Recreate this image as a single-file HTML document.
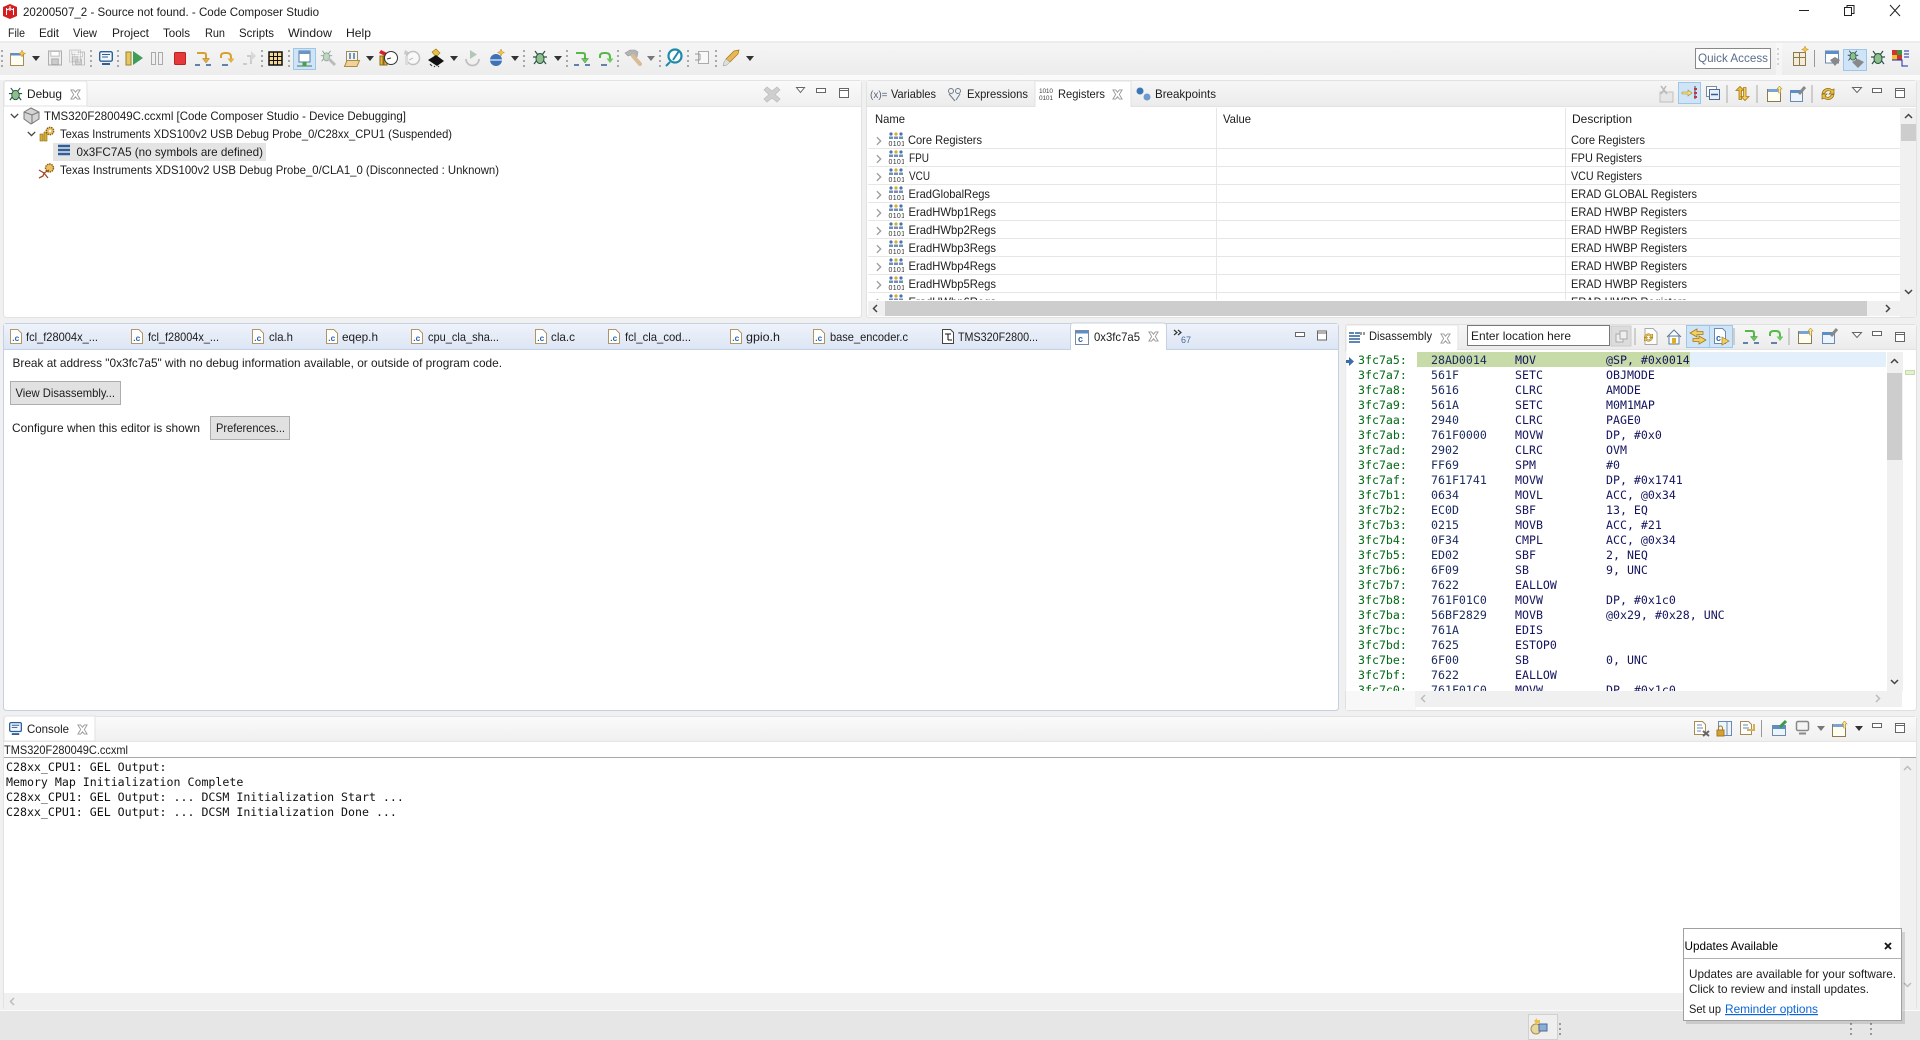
<!DOCTYPE html>
<html><head><meta charset="utf-8"><title>Code Composer Studio</title>
<style>
html,body{margin:0;padding:0;background:#f0f0f0;width:1920px;height:1040px;overflow:hidden}
svg{display:block}
text{font-family:"Liberation Sans",sans-serif;font-size:12px;fill:#1c1c1c}
.m text,text.m{font-family:"DejaVu Sans Mono","Liberation Mono",monospace;font-size:11.6px;fill:#14145e}
.a text{fill:#006a14}
.o text{fill:#1c2c60}
</style></head><body>
<svg xmlns="http://www.w3.org/2000/svg" width="1920" height="1040" viewBox="0 0 1920 1040">
<defs>
<linearGradient id="tb" x1="0" y1="0" x2="0" y2="1"><stop offset="0" stop-color="#f6f6f6"/><stop offset="1" stop-color="#ececec"/></linearGradient>
<linearGradient id="tabg" x1="0" y1="0" x2="0" y2="1"><stop offset="0" stop-color="#fafafa"/><stop offset="1" stop-color="#f0f0f0"/></linearGradient>
<linearGradient id="edg" x1="0" y1="0" x2="0" y2="1"><stop offset="0" stop-color="#eef2fa"/><stop offset="1" stop-color="#dde6f5"/></linearGradient>
<clipPath id="c1"><rect x="868" y="108" width="1032" height="192"/></clipPath>
<clipPath id="c2"><rect x="1345" y="350" width="542" height="341"/></clipPath>
<symbol id="tri" viewBox="0 0 8 5"><path d="M0 0h8L4 5z" fill="#333"/></symbol>
<symbol id="trig" viewBox="0 0 8 5"><path d="M0 0h8L4 5z" fill="#777"/></symbol>
<symbol id="x" viewBox="0 0 12 12"><path d="M1 1l3 0 2 2.500L8 1h3l-3 5 3 5H8L6 8.500 4 11H1l3-5z" fill="#fff" stroke="#9a9a9a"/></symbol>
<symbol id="min" viewBox="0 0 10 5"><rect x=".5" y=".5" width="9" height="4" fill="#fff" stroke="#666"/></symbol>
<symbol id="max" viewBox="0 0 10 10"><rect x=".5" y=".5" width="9" height="9" fill="#fff" stroke="#666"/><path d="M0 2.500h10" stroke="#666"/></symbol>
<symbol id="cfile" viewBox="0 0 13 16"><path d="M.5.5h8l4 4v11H.5z" fill="#fff" stroke="#a88c55"/><text x="2.500" y="13" style="font-size:9px;fill:#2a62a8;font-weight:bold">.c</text></symbol>
<symbol id="reg" viewBox="0 0 16 16"><circle cx="3" cy="2" r="1.600" fill="#4c74a8"/><circle cx="8" cy="2" r="1.600" fill="#d8aa38"/><circle cx="13" cy="2" r="1.600" fill="#4c74a8"/><path d="M1 7V4.500h4V7zM6 7V4.500h4V7zM11 7V4.500h4V7z" fill="#6f8fb8"/><text x=".5" y="14" style="font-size:7px;fill:#333;letter-spacing:.3px">0101</text></symbol>
<symbol id="bug" viewBox="0 0 16 16"><path d="M3 1l3 4M13 1l-3 4M1 7h4M15 7h-4M2 14l3-4M14 14l-3-4" stroke="#2b5348" stroke-width="1.200" fill="none"/><ellipse cx="8" cy="8.500" rx="4" ry="5" fill="#8cc088" stroke="#2b5348"/></symbol>
<symbol id="chev" viewBox="0 0 7 11"><path d="M1 1l4.500 4.500L1 10" fill="none" stroke="#9a9a9a" stroke-width="1.500"/></symbol>
<symbol id="down" viewBox="0 0 11 7"><path d="M1 1l4.500 4.500L10 1" fill="none" stroke="#444" stroke-width="1.600"/></symbol>
<symbol id="gear" viewBox="0 0 16 16"><rect x="1" y="8" width="3" height="7" fill="#d8b030" stroke="#8a6a10" stroke-width=".6"/><rect x="5" y="6" width="3" height="9" fill="#d8b030" stroke="#8a6a10" stroke-width=".6"/><circle cx="11" cy="5" r="3.700" fill="#e8c060" stroke="#8a5a10" stroke-width="1.400" stroke-dasharray="1.500 .8"/><circle cx="11" cy="5" r="1.200" fill="#fff"/></symbol>
<symbol id="newf" viewBox="0 0 16 16"><rect x=".5" y="3.500" width="13" height="12" fill="#fdfdf2" stroke="#a88c55"/><rect x="1" y="3" width="12" height="2.500" fill="#5c8fc8"/><path d="M12 0l1 2.500 2.500 1-2.500 1-1 2.500-1-2.500-2.500-1 2.500-1z" fill="#f5c840" stroke="#c08a20" stroke-width=".5"/></symbol>
<symbol id="save" viewBox="0 0 15 16"><path d="M.5.500h14v15H.5z" fill="#eee" stroke="#aaa"/><rect x="3" y="1" width="9" height="5" fill="#fff" stroke="#bbb"/><rect x="4" y="9" width="7" height="6" fill="#ccc" stroke="#aaa"/></symbol>
<symbol id="mon" viewBox="0 0 14 14"><rect x=".7" y=".7" width="12.600" height="9.500" rx="1.500" fill="#f2f6fb" stroke="#2f5f98" stroke-width="1.400"/><path d="M3 3.500h8M3 6h6" stroke="#2f5f98"/><path d="M3 13h8" stroke="#2f5f98" stroke-width="2"/></symbol>
<symbol id="into" viewBox="0 0 16 16"><path d="M2 3h7q2 0 2 2v5" fill="none" stroke="#d8a030" stroke-width="2"/><path d="M7.500 8.500h7L11 13z" fill="#e0b040" stroke="#a87818" stroke-width=".5"/><path d="M0 15h5M11 15h5" stroke="#345c94" stroke-width="1.500"/></symbol>
<symbol id="over" viewBox="0 0 16 16"><path d="M3 8V6q0-3 4-3h2q4 0 4 4v2" fill="none" stroke="#d8a030" stroke-width="2"/><path d="M9.500 8.500h7L13 13z" fill="#e0b040"/><path d="M4 15h6" stroke="#345c94" stroke-width="1.500"/></symbol>
<symbol id="intog" viewBox="0 0 16 16"><path d="M2 3h7q2 0 2 2v5" fill="none" stroke="#55b848" stroke-width="2"/><path d="M7.500 8.500h7L11 13z" fill="#6cc860" stroke="#3a8a30" stroke-width=".5"/><path d="M0 15h5M11 15h5" stroke="#345c94" stroke-width="1.500"/></symbol>
<symbol id="overg" viewBox="0 0 16 16"><path d="M3 8V6q0-3 4-3h2q4 0 4 4v2" fill="none" stroke="#55b848" stroke-width="2"/><path d="M9.500 8.500h7L13 13z" fill="#6cc860"/><path d="M4 15h6" stroke="#345c94" stroke-width="1.500"/></symbol>
<symbol id="wnew" viewBox="0 0 16 16"><rect x=".5" y="3.500" width="13" height="12" fill="#fffef0" stroke="#8a7a50"/><rect x="1" y="3" width="12" height="3" fill="#78a4d4"/><path d="M12.500 0l2.500 3h-1.500v4h-2V3H10z" fill="#f8e8a0" stroke="#c09a30" stroke-width=".6"/></symbol>
<symbol id="wpin" viewBox="0 0 16 16"><rect x=".5" y="4.500" width="12" height="11" fill="#eef4fb" stroke="#6a8ab0"/><rect x="1" y="4" width="11" height="3" fill="#5c8fc8"/><path d="M15 1L9 8" stroke="#888" stroke-width="3"/></symbol>
<symbol id="swap" viewBox="0 0 17 16"><path d="M4 14V5H1l4-4 4 4H6.500v9z" fill="#e8c040" stroke="#a87818" stroke-width=".8"/><path d="M11 2v9h3l-4 4-4-4h2.500V2z" fill="#f0d060" stroke="#a87818" stroke-width=".8"/></symbol>
<symbol id="sync" viewBox="0 0 16 16"><path d="M2 8a6 6 0 0 1 10-4l2-1v5h-5l2-2a3.500 3.500 0 0 0-6 1z" fill="#ecc040" stroke="#8a6a18" stroke-width=".7"/><path d="M14 8a6 6 0 0 1-10 4l-2 1V8h5l-2 2a3.500 3.500 0 0 0 6-1z" fill="#ecc040" stroke="#8a6a18" stroke-width=".7"/></symbol>
</defs>

<rect width="1920" height="1040" fill="#f0f0f0"/>
<rect width="1920" height="41" fill="#fff"/>
<rect y="41" width="1920" height="34" fill="url(#tb)"/>
<rect y="41" width="1920" height="2" fill="#ececec"/>
<rect y="75" width="1920" height="5" fill="#fafafa"/>

<!-- title -->
<path d="M3 7l7-3 7 3v9l-7 3-7-3z" fill="#d21f1f"/><path d="M6.500 8v7M10 6v5M13.500 8v7M6.500 10l3.500-1.500 3.500 1.500" stroke="#fff" stroke-width="1" fill="none"/>
<text x="23" y="16" textLength="296" lengthAdjust="spacingAndGlyphs">20200507_2 - Source not found. - Code Composer Studio</text>
<path d="M1799 10.500h10" stroke="#222"/><path d="M1844.500 7.500h7v8h-7zM1847 7.500v-2h7v8h-2" fill="none" stroke="#222"/><path d="M1890 5l10 11M1900 5l-10 11" stroke="#222"/>

<!-- menu -->
<g>
<text x="8" y="37" textLength="17" lengthAdjust="spacingAndGlyphs">File</text>
<text x="39" y="37" textLength="20" lengthAdjust="spacingAndGlyphs">Edit</text>
<text x="73" y="37" textLength="24" lengthAdjust="spacingAndGlyphs">View</text>
<text x="112" y="37" textLength="37" lengthAdjust="spacingAndGlyphs">Project</text>
<text x="163" y="37" textLength="27" lengthAdjust="spacingAndGlyphs">Tools</text>
<text x="205" y="37" textLength="20" lengthAdjust="spacingAndGlyphs">Run</text>
<text x="239" y="37" textLength="35" lengthAdjust="spacingAndGlyphs">Scripts</text>
<text x="288" y="37" textLength="44" lengthAdjust="spacingAndGlyphs">Window</text>
<text x="346" y="37" textLength="25" lengthAdjust="spacingAndGlyphs">Help</text>
</g>

<!-- toolbar grips -->
<g stroke="#a8a8a8" stroke-width="2" stroke-dasharray="2 3">
<path d="M2 50v17M91 50v17M118 50v17M262 50v17M289 50v17M524 50v17M567 50v17M618 50v17M660 50v17M688 50v17M716 50v17M1778 48v20"/>
</g>
<rect x="1776" y="43" width="6" height="32" fill="#fbfbfb" opacity=".5"/>
<!-- toolbar icons -->
<use href="#newf" x="10" y="50" width="16" height="16"/><use href="#tri" x="32" y="56" width="8" height="5"/>
<use href="#save" x="48" y="50" width="14" height="16"/>
<use href="#save" x="72" y="51" width="13" height="15" opacity=".8"/><use href="#save" x="69" y="49" width="12" height="14" opacity=".6"/>
<use href="#mon" x="99" y="51" width="14" height="14"/>
<rect x="126" y="52" width="5" height="13" fill="#e6c860" stroke="#9a8030"/><path d="M133 51l10 7-10 7z" fill="#3f9d58"/>
<path d="M151.500 52.500h4v12h-4zM158.500 52.500h4v12h-4z" fill="#f0f0f0" stroke="#aaa"/>
<rect x="174.500" y="52.500" width="11" height="12" rx="1" fill="#e5383a" stroke="#b22"/>
<use href="#into" x="195" y="50" width="16" height="16"/>
<use href="#over" x="218" y="50" width="16" height="16"/>
<g opacity=".45"><path d="M243 64h4M251 64v-8h-4" fill="none" stroke="#888" stroke-width="1.500"/><path d="M251 51l5 5-5 5z" fill="#bbb"/></g>
<rect x="269" y="52" width="13" height="13" fill="#f8d890" stroke="#111" stroke-width="1.500"/><path d="M273.500 52v13M277.500 52v13M269 56.500h13M269 60.500h13" stroke="#111"/>
<rect x="293.500" y="48.500" width="22" height="21" fill="#cfe4f7" stroke="#9cc6ea"/>
<rect x="299" y="51" width="11" height="11" fill="#fff" stroke="#5a7ba0"/><rect x="299" y="51" width="11" height="3" fill="#6a94c4"/><path d="M297 66h15M304.500 62v4" stroke="#4a7a50"/><rect x="302.500" y="62" width="4" height="4" fill="#4aa04a"/>
<g opacity=".5"><use href="#bug" x="320" y="50" width="13" height="13"/><path d="M328 58l7 7" stroke="#888" stroke-width="3"/></g>
<path d="M346.500 51.500h11v11h-11z" fill="#f8f6ec" stroke="#9a8a60"/><path d="M344.500 66.500l2.500-6h12.500l-2.500 6z" fill="#eed49c" stroke="#b08a40"/><path d="M350 53v6M354 53v6" stroke="#2a62a8" stroke-width="1.300"/>
<use href="#tri" x="366" y="56" width="8" height="5"/>
<path d="M381 50l6 3-2 3-6-3z" fill="#d91f2a"/><rect x="380" y="56" width="3" height="9" fill="#e0b840" stroke="#8a6a10"/><rect x="384" y="56" width="3" height="9" fill="#e0b840" stroke="#8a6a10"/><circle cx="391" cy="58" r="6.500" fill="#fff" stroke="#333"/><path d="M391 58l-4 1" stroke="#333"/>
<g opacity=".55"><path d="M405 50l5 3-2 3-4-2z" fill="#aaa"/><circle cx="413" cy="58" r="6.500" fill="#fff" stroke="#999" stroke-width="1.500"/><path d="M413 58l-4 2" stroke="#999"/><path d="M405 56h3v9h-3z" fill="#ccc"/></g>
<path d="M432 52l4-3 4 4-4 4z" fill="#e8c040" stroke="#a87818" stroke-width=".7"/><path d="M428 60l8-5 8 6-7 5z" fill="#111"/><path d="M430 64l2 2M434 66l1 1M438 66l1 1" stroke="#333"/>
<use href="#tri" x="450" y="56" width="8" height="5"/>
<g opacity=".55"><path d="M466 59a6.500 6.500 0 0 0 13 0" fill="none" stroke="#999" stroke-width="1.800"/><path d="M470 50l7 4.500-7 4.500z" fill="#7fa58a"/></g>
<circle cx="496" cy="60" r="6" fill="#3f72b4"/><path d="M490 60h12" stroke="#9fc0e6" stroke-width="2"/><path d="M501 49l1 2.500 2.500 1-2.500 1-1 2.500-1-2.500-2.500-1 2.500-1z" fill="#f5c840" stroke="#c08a20" stroke-width=".5"/>
<use href="#tri" x="511" y="56" width="8" height="5"/>
<use href="#bug" x="532" y="50" width="16" height="16"/><use href="#tri" x="554" y="56" width="8" height="5"/>
<use href="#intog" x="574" y="50" width="16" height="16"/>
<use href="#overg" x="597" y="50" width="16" height="16"/>
<path d="M625 53l5-3h5l3 2-1 5-3 1-3-3-3 1z" fill="#b4b4b4" stroke="#999" stroke-width=".6"/><path d="M633 56l7 8" stroke="#d8bc98" stroke-width="4" stroke-linecap="round"/>
<use href="#trig" x="647" y="56" width="8" height="5"/>
<circle cx="675" cy="56" r="6.500" fill="#fff" stroke="#1d8aa8" stroke-width="2.200"/><path d="M679 51l-6 9M670 62l-4 4" stroke="#1d8aa8" stroke-width="2"/>
<rect x="698.500" y="51.500" width="10" height="12" fill="#f8f8f8" stroke="#aaa"/><path d="M695 54h5M695 60h5M700 54v6" stroke="#999" fill="none"/>
<path d="M739 50l-1 4-8 8-4-3 8-8z" fill="#e8b858" stroke="#a87818" stroke-width=".7"/><path d="M730 62l-3 3-4 1 1-4 2-3z" fill="#ddd" stroke="#998" stroke-width=".5"/>
<use href="#tri" x="746" y="56" width="8" height="5"/>

<!-- quick access -->
<rect x="1695.500" y="48.500" width="75" height="20" fill="#fff" stroke="#888"/>
<text x="1698" y="62" textLength="70" lengthAdjust="spacingAndGlyphs" style="fill:#5a6d8c">Quick Access</text>
<rect x="1793.500" y="52.500" width="12" height="13" fill="#f4ecd8" stroke="#8a7a50"/><path d="M1793 57.500h13M1799.500 52v14" stroke="#8a7a50"/><path d="M1805 46l1 2.500 2.500 1-2.500 1-1 2.500-1-2.500-2.500-1 2.500-1z" fill="#f5c840" stroke="#c08a20" stroke-width=".5"/>
<path d="M1814.500 50v17" stroke="#999"/>
<rect x="1825.500" y="51" width="13" height="12" fill="#fff" stroke="#6a8ab0"/><rect x="1826" y="51" width="12" height="3" fill="#5c8fc8"/><path d="M1830 60l5-3 5 3-5 6z" fill="#888"/>
<rect x="1843.500" y="49.500" width="23" height="21" fill="#cfe4f7" stroke="#9cc6ea"/>
<use href="#bug" x="1847" y="50" width="12" height="12"/><path d="M1852 62l6-3 6 3-6 6z" fill="#888"/>
<use href="#bug" x="1870" y="50" width="16" height="16"/>
<rect x="1892" y="50" width="5" height="5" fill="#d63030"/><rect x="1897" y="50" width="5" height="5" fill="#3a9a3a"/><rect x="1892" y="55" width="5" height="5" fill="#f0c030"/><rect x="1897" y="55" width="5" height="5" fill="#d63030"/><path d="M1892 60h10v6h6M1904 51h5M1904 54h5M1904 57h5" stroke="#1a2aa8" fill="none"/>

<!-- DEBUG PANEL -->
<rect x="3.500" y="80.500" width="858" height="237" rx="3" fill="#fff" stroke="#e2e2e2"/>
<rect x="4" y="81" width="857" height="25" fill="url(#tabg)"/>
<path d="M4 106V84q0-3 3-3h77q3 0 3 3v22z" fill="#fff" stroke="#e2e2e2"/>
<path d="M87 106.500h774" stroke="#e4e4e4"/>
<use href="#bug" x="8" y="87" width="15" height="15"/>
<text x="27" y="98" textLength="35" lengthAdjust="spacingAndGlyphs">Debug</text>
<use href="#x" x="70" y="89" width="11" height="11"/>
<path d="M767 87l5 4 5-4 3 3-5 4.500 5 4.500-3 3-5-4-5 4-3-3 5-4.500-5-4.500z" fill="#cfcfcf" stroke="#bbb" stroke-width=".7"/>
<path d="M796.500 87.500h8l-4 5z" fill="#fff" stroke="#666"/>
<use href="#min" x="816" y="88" width="10" height="5"/><use href="#max" x="839" y="88" width="10" height="10"/>

<use href="#down" x="10" y="113" width="9" height="6"/>
<path d="M24 112l7-4 8 4v7l-8 5-7-5z" fill="#d4d4d4" stroke="#777"/><path d="M24 112l8 3 7-3M32 115v9" stroke="#777" fill="none"/>
<text x="44" y="120" textLength="362" lengthAdjust="spacingAndGlyphs">TMS320F280049C.ccxml [Code Composer Studio - Device Debugging]</text>
<use href="#down" x="27" y="131" width="9" height="6"/>
<use href="#gear" x="39" y="126" width="16" height="16"/>
<text x="60" y="138" textLength="392" lengthAdjust="spacingAndGlyphs">Texas Instruments XDS100v2 USB Debug Probe_0/C28xx_CPU1 (Suspended)</text>
<rect x="53" y="143" width="213" height="18" fill="#e4e4e4"/>
<path d="M58 146h12M58 150h12M58 154h12" stroke="#2f5f98" stroke-width="2.500"/>
<text x="76.500" y="156" textLength="186.500" lengthAdjust="spacingAndGlyphs">0x3FC7A5  (no symbols are defined)</text>
<circle cx="49.500" cy="168" r="4" fill="#e8c060" stroke="#8a5a10" stroke-width="1.400" stroke-dasharray="1.500 .8"/>
<path d="M39 170l5 3 5-3M44 173l-1 3-4 2M44 173l4 5" stroke="#a04a2a" fill="none" stroke-width="1.300"/>
<text x="60" y="174" textLength="439" lengthAdjust="spacingAndGlyphs">Texas Instruments XDS100v2 USB Debug Probe_0/CLA1_0 (Disconnected : Unknown)</text>

<!-- REGISTERS PANEL -->
<rect x="866.500" y="80.500" width="1050" height="237" rx="3" fill="#fff" stroke="#e2e2e2"/>
<rect x="867" y="81" width="1049" height="25" fill="url(#tb)"/>
<path d="M867 106.500h1049" stroke="#e2e2e2"/>
<path d="M1035 106V81h96v25" fill="#fff" stroke="#e2e2e2"/>
<rect x="1035.500" y="104" width="95" height="4" fill="#fff"/>
<text x="870" y="98" style="font-size:10px;fill:#5a6478">(x)=</text>
<text x="891" y="98" textLength="45" lengthAdjust="spacingAndGlyphs">Variables</text>
<circle cx="951" cy="91" r="2.500" fill="none" stroke="#6a7a8a"/><circle cx="958" cy="91" r="2.500" fill="none" stroke="#6a7a8a"/><path d="M949 94l6 7M960 94l-4 6" stroke="#6a7a8a"/>
<text x="967" y="98" textLength="61" lengthAdjust="spacingAndGlyphs">Expressions</text>
<text x="1039" y="93" textLength="14" style="font-size:6.500px;fill:#444">1010</text><text x="1039" y="100" textLength="14" style="font-size:6.500px;fill:#444">0101</text>
<text x="1058" y="98" textLength="47" lengthAdjust="spacingAndGlyphs">Registers</text>
<use href="#x" x="1112" y="89" width="11" height="11"/>
<circle cx="1140" cy="91" r="3.500" fill="#3a78b8"/><circle cx="1147" cy="97" r="3.500" fill="#6d9bcc"/>
<text x="1155" y="98" textLength="61" lengthAdjust="spacingAndGlyphs">Breakpoints</text>

<g opacity=".45"><rect x="1660" y="92" width="13" height="10" fill="#ddd" stroke="#888"/><path d="M1661 86l6 8M1666 86l-5 8" stroke="#777" stroke-width="1.500"/></g>
<rect x="1678.500" y="82.500" width="22" height="21" fill="#cfe4f7" stroke="#9cc6ea"/>
<path d="M1682 92h6v-2l4 3-4 3v-2h-6z" fill="#f0e080" stroke="#a89030" stroke-width=".6"/><path d="M1695 86v13" stroke="#6a7a90" stroke-width="1.500"/><rect x="1694" y="88" width="3" height="2" fill="#c33"/><rect x="1694" y="92" width="3" height="2" fill="#c33"/><rect x="1694" y="96" width="3" height="2" fill="#c33"/>
<rect x="1706.500" y="86.500" width="10" height="10" fill="#fff" stroke="#7a8aa0"/><rect x="1709.500" y="89.500" width="10" height="10" fill="#e8eff8" stroke="#4a6a98"/><path d="M1711 94.500h7" stroke="#345c94" stroke-width="1.500"/>
<path d="M1727 85v18M1757 85v18M1812 85v18" stroke="#aaa"/>
<use href="#swap" x="1735" y="85" width="17" height="17"/>
<use href="#wnew" x="1767" y="86" width="16" height="16"/>
<use href="#wpin" x="1790" y="86" width="16" height="16"/>
<use href="#sync" x="1820" y="86" width="16" height="16"/>
<path d="M1852.500 87.500h9l-4.500 5z" fill="#fff" stroke="#666"/>
<use href="#min" x="1872" y="88" width="10" height="5"/><use href="#max" x="1895" y="88" width="10" height="10"/>

<!-- registers table -->
<text x="875" y="123" textLength="30" lengthAdjust="spacingAndGlyphs">Name</text>
<text x="1223" y="123" textLength="28" lengthAdjust="spacingAndGlyphs">Value</text>
<text x="1572" y="123" textLength="60" lengthAdjust="spacingAndGlyphs">Description</text>
<g stroke="#e6e6e6">
<path d="M1216.500 108v192M1565.500 108v192"/>
<path d="M868 148.500h1032M868 166.500h1032M868 184.500h1032M868 202.500h1032M868 220.500h1032M868 238.500h1032M868 256.500h1032M868 274.500h1032M868 292.500h1032"/>
</g>
<g clip-path="url(#c1)">
<use href="#chev" x="876" y="136" width="6" height="10"/><use href="#reg" x="888" y="132" width="16" height="16"/><text x="908" y="144" textLength="74" lengthAdjust="spacingAndGlyphs">Core Registers</text><text x="1571" y="144" textLength="74" lengthAdjust="spacingAndGlyphs">Core Registers</text>
<use href="#chev" x="876" y="154" width="6" height="10"/><use href="#reg" x="888" y="150" width="16" height="16"/><text x="909" y="162" textLength="20" lengthAdjust="spacingAndGlyphs">FPU</text><text x="1571" y="162" textLength="71" lengthAdjust="spacingAndGlyphs">FPU Registers</text>
<use href="#chev" x="876" y="172" width="6" height="10"/><use href="#reg" x="888" y="168" width="16" height="16"/><text x="909" y="180" textLength="21" lengthAdjust="spacingAndGlyphs">VCU</text><text x="1571" y="180" textLength="71" lengthAdjust="spacingAndGlyphs">VCU Registers</text>
<use href="#chev" x="876" y="190" width="6" height="10"/><use href="#reg" x="888" y="186" width="16" height="16"/><text x="908.500" y="198" textLength="81.500" lengthAdjust="spacingAndGlyphs">EradGlobalRegs</text><text x="1571" y="198" textLength="126" lengthAdjust="spacingAndGlyphs">ERAD GLOBAL Registers</text>
<use href="#chev" x="876" y="208" width="6" height="10"/><use href="#reg" x="888" y="204" width="16" height="16"/><text x="908.500" y="216" textLength="87.500" lengthAdjust="spacingAndGlyphs">EradHWbp1Regs</text><text x="1571" y="216" textLength="116" lengthAdjust="spacingAndGlyphs">ERAD HWBP Registers</text>
<use href="#chev" x="876" y="226" width="6" height="10"/><use href="#reg" x="888" y="222" width="16" height="16"/><text x="908.500" y="234" textLength="87.500" lengthAdjust="spacingAndGlyphs">EradHWbp2Regs</text><text x="1571" y="234" textLength="116" lengthAdjust="spacingAndGlyphs">ERAD HWBP Registers</text>
<use href="#chev" x="876" y="244" width="6" height="10"/><use href="#reg" x="888" y="240" width="16" height="16"/><text x="908.500" y="252" textLength="87.500" lengthAdjust="spacingAndGlyphs">EradHWbp3Regs</text><text x="1571" y="252" textLength="116" lengthAdjust="spacingAndGlyphs">ERAD HWBP Registers</text>
<use href="#chev" x="876" y="262" width="6" height="10"/><use href="#reg" x="888" y="258" width="16" height="16"/><text x="908.500" y="270" textLength="87.500" lengthAdjust="spacingAndGlyphs">EradHWbp4Regs</text><text x="1571" y="270" textLength="116" lengthAdjust="spacingAndGlyphs">ERAD HWBP Registers</text>
<use href="#chev" x="876" y="280" width="6" height="10"/><use href="#reg" x="888" y="276" width="16" height="16"/><text x="908.500" y="288" textLength="87.500" lengthAdjust="spacingAndGlyphs">EradHWbp5Regs</text><text x="1571" y="288" textLength="116" lengthAdjust="spacingAndGlyphs">ERAD HWBP Registers</text>
<use href="#chev" x="876" y="298" width="6" height="10"/><use href="#reg" x="888" y="294" width="16" height="16"/><text x="908.500" y="306" textLength="87.500" lengthAdjust="spacingAndGlyphs">EradHWbp6Regs</text><text x="1571" y="306" textLength="116" lengthAdjust="spacingAndGlyphs">ERAD HWBP Registers</text>
</g>
<rect x="1900" y="108" width="16" height="209" fill="#f0f0f0"/>
<rect x="1901" y="124" width="15" height="17" fill="#cdcdcd"/>
<path d="M1905 118l3.500-3.500 3.500 3.500" fill="none" stroke="#444" stroke-width="1.500"/>
<path d="M1905 290l3.500 3.500 3.500-3.500" fill="none" stroke="#444" stroke-width="1.500"/>
<rect x="868" y="301" width="1032" height="15" fill="#f0f0f0"/>
<rect x="885" y="301" width="982" height="15" fill="#cdcdcd"/>
<path d="M877 305l-3.500 3.500 3.500 3.500M1886 305l3.500 3.500-3.500 3.500" fill="none" stroke="#444" stroke-width="1.500"/>

<!-- EDITOR PANEL -->
<rect x="3.500" y="323.500" width="1335" height="387" rx="3" fill="#fff" stroke="#c4d0e4"/>
<rect x="4" y="324" width="1334" height="25" fill="url(#edg)"/>
<path d="M4 349.500h1334" stroke="#c4d0e4"/>
<path d="M1070.500 349V326q0-3 3-3h90q3 0 3 3v23" fill="#fff" stroke="#c4d0e4"/>
<rect x="1071" y="348" width="95" height="3" fill="#fff"/>
<use href="#cfile" x="10" y="329" width="12" height="15"/><text x="26" y="341" textLength="72" lengthAdjust="spacingAndGlyphs">fcl_f28004x_...</text>
<use href="#cfile" x="131" y="329" width="12" height="15"/><text x="148" y="341" textLength="71" lengthAdjust="spacingAndGlyphs">fcl_f28004x_...</text>
<use href="#cfile" x="252" y="329" width="12" height="15"/><text x="269" y="341" textLength="24" lengthAdjust="spacingAndGlyphs">cla.h</text>
<use href="#cfile" x="326" y="329" width="12" height="15"/><text x="342" y="341" textLength="36" lengthAdjust="spacingAndGlyphs">eqep.h</text>
<use href="#cfile" x="411" y="329" width="12" height="15"/><text x="428" y="341" textLength="71" lengthAdjust="spacingAndGlyphs">cpu_cla_sha...</text>
<use href="#cfile" x="535" y="329" width="12" height="15"/><text x="551" y="341" textLength="24" lengthAdjust="spacingAndGlyphs">cla.c</text>
<use href="#cfile" x="608" y="329" width="12" height="15"/><text x="625" y="341" textLength="66" lengthAdjust="spacingAndGlyphs">fcl_cla_cod...</text>
<use href="#cfile" x="730" y="329" width="12" height="15"/><text x="746" y="341" textLength="34" lengthAdjust="spacingAndGlyphs">gpio.h</text>
<use href="#cfile" x="813" y="329" width="12" height="15"/><text x="830" y="341" textLength="78" lengthAdjust="spacingAndGlyphs">base_encoder.c</text>
<path d="M942.500 329.500h8l3 3v11h-11z" fill="#fff" stroke="#444"/><path d="M945 334h6M948 334v6M948 340h4" stroke="#111" fill="none"/>
<text x="958" y="341" textLength="80" lengthAdjust="spacingAndGlyphs">TMS320F2800...</text>
<rect x="1075.500" y="330.500" width="13" height="14" fill="#fff" stroke="#7a8aa0"/><rect x="1076" y="331" width="12" height="2.500" fill="#5c8fc8"/><text x="1078" y="342" style="font-size:9px;fill:#2a62a8;font-weight:bold">c</text>
<text x="1094" y="341" textLength="46" lengthAdjust="spacingAndGlyphs">0x3fc7a5</text>
<use href="#x" x="1148" y="331" width="11" height="11"/>
<path d="M1174 330l3 2.500-3 2.500M1178 330l3 2.500-3 2.500" fill="none" stroke="#333" stroke-width="1.200"/>
<text x="1181" y="343" textLength="10" style="font-size:9px;fill:#4a6a98">67</text>
<use href="#min" x="1295" y="332" width="10" height="5"/><use href="#max" x="1317" y="330" width="10" height="11"/>

<text x="12.500" y="367" textLength="489.500" lengthAdjust="spacingAndGlyphs">Break at address "0x3fc7a5" with no debug information available, or outside of program code.</text>
<rect x="10.500" y="381.500" width="110" height="23" fill="#e1e1e1" stroke="#adadad"/>
<text x="15.500" y="397" textLength="99.500" lengthAdjust="spacingAndGlyphs">View Disassembly...</text>
<text x="12" y="432" textLength="188" lengthAdjust="spacingAndGlyphs">Configure when this editor is shown</text>
<rect x="210.500" y="416.500" width="79" height="23" fill="#e1e1e1" stroke="#adadad"/>
<text x="216" y="432" textLength="69" lengthAdjust="spacingAndGlyphs">Preferences...</text>

<!-- DISASSEMBLY PANEL -->
<rect x="1345.500" y="324.500" width="571" height="386" rx="3" fill="#fff" stroke="#e0e0e0"/>
<rect x="1346" y="325" width="570" height="24" fill="url(#tb)"/>
<path d="M1346 349.500h570" stroke="#e2e2e2"/>
<path d="M1346 349V325h112v24" fill="#fff" stroke="#e2e2e2"/>
<rect x="1347" y="347" width="110" height="4" fill="#fff"/>
<path d="M1349 333h5M1355 333h5M1349 336h11M1349 339h11M1349 342h11" stroke="#2f5f98" stroke-width="1.500"/><path d="M1361 332v3M1364 332v3" stroke="#333"/>
<text x="1369" y="340" textLength="63" lengthAdjust="spacingAndGlyphs">Disassembly</text>
<use href="#x" x="1440" y="333" width="11" height="11"/>
<rect x="1467.500" y="325.500" width="142" height="20" fill="#fff" stroke="#777"/>
<text x="1471" y="340" textLength="100" lengthAdjust="spacingAndGlyphs">Enter location here</text>
<rect x="1611" y="326" width="20" height="20" fill="#dcdcdc" stroke="#ccc"/><rect x="1616" y="334" width="7" height="8" fill="#eee" stroke="#aaa"/><rect x="1620" y="331" width="7" height="8" fill="#eee" stroke="#aaa"/>
<path d="M1635 328v17M1734 328v17M1789 328v17" stroke="#aaa"/>
<path d="M1645 328.500h8l4 4v12h-12z" fill="#fff" stroke="#aaa"/><use href="#sync" x="1643" y="332" width="11" height="11"/>
<path d="M1667 337l7-7 7 7M1669 336v8h10v-8z" fill="#fff" stroke="#5a7ba0"/><rect x="1672" y="338" width="4" height="6" fill="#d8b030"/>
<rect x="1686.500" y="325.500" width="23" height="22" fill="#cfe4f7" stroke="#9cc6ea"/>
<rect x="1709.500" y="325.500" width="23" height="22" fill="#cfe4f7" stroke="#9cc6ea"/>
<path d="M1697 329l-7 4 7 4v-2.500h6V331.500h-6zM1699 336l7 4-7 4v-2.500h-6v-3h6z" fill="#f0d060" stroke="#a87818" stroke-width=".8"/>
<path d="M1714.500 328.500h8l3 3v12h-11z" fill="#fff" stroke="#6a8ab0"/><text x="1716" y="341" style="font-size:9px;fill:#2a62a8;font-weight:bold">c</text><path d="M1722 337l7 4-7 4z" fill="#f0d060" stroke="#a87818" stroke-width=".7"/>
<use href="#intog" x="1743" y="328" width="16" height="16"/>
<use href="#overg" x="1767" y="328" width="16" height="16"/>
<use href="#wnew" x="1798" y="328" width="16" height="16"/>
<use href="#wpin" x="1822" y="328" width="16" height="16"/>
<path d="M1852.500 332.500h9l-4.500 5z" fill="#fff" stroke="#666"/>
<use href="#min" x="1872" y="331" width="10" height="5"/><use href="#max" x="1895" y="332" width="10" height="10"/>

<rect x="1417" y="352" width="469" height="15" fill="#e4effc"/>
<rect x="1417" y="352" width="273" height="15" fill="#c6dba8"/>
<path d="M1346 352v339" stroke="#f6f6f6"/>
<path d="M1346 360h3v-3l5 4.500-5 4.500v-3h-3z" fill="#3b6ea8"/>
<g clip-path="url(#c2)">
<g class="m a">
<text x="1358" y="364">3fc7a5:</text><text x="1358" y="379">3fc7a7:</text><text x="1358" y="394">3fc7a8:</text><text x="1358" y="409">3fc7a9:</text><text x="1358" y="424">3fc7aa:</text><text x="1358" y="439">3fc7ab:</text><text x="1358" y="454">3fc7ad:</text><text x="1358" y="469">3fc7ae:</text><text x="1358" y="484">3fc7af:</text><text x="1358" y="499">3fc7b1:</text><text x="1358" y="514">3fc7b2:</text><text x="1358" y="529">3fc7b3:</text><text x="1358" y="544">3fc7b4:</text><text x="1358" y="559">3fc7b5:</text><text x="1358" y="574">3fc7b6:</text><text x="1358" y="589">3fc7b7:</text><text x="1358" y="604">3fc7b8:</text><text x="1358" y="619">3fc7ba:</text><text x="1358" y="634">3fc7bc:</text><text x="1358" y="649">3fc7bd:</text><text x="1358" y="664">3fc7be:</text><text x="1358" y="679">3fc7bf:</text><text x="1358" y="694">3fc7c0:</text>
</g>
<g class="m o">
<text x="1431" y="364">28AD0014</text><text x="1431" y="379">561F</text><text x="1431" y="394">5616</text><text x="1431" y="409">561A</text><text x="1431" y="424">2940</text><text x="1431" y="439">761F0000</text><text x="1431" y="454">2902</text><text x="1431" y="469">FF69</text><text x="1431" y="484">761F1741</text><text x="1431" y="499">0634</text><text x="1431" y="514">EC0D</text><text x="1431" y="529">0215</text><text x="1431" y="544">0F34</text><text x="1431" y="559">ED02</text><text x="1431" y="574">6F09</text><text x="1431" y="589">7622</text><text x="1431" y="604">761F01C0</text><text x="1431" y="619">56BF2829</text><text x="1431" y="634">761A</text><text x="1431" y="649">7625</text><text x="1431" y="664">6F00</text><text x="1431" y="679">7622</text><text x="1431" y="694">761F01C0</text>
</g>
<g class="m">
<text x="1515" y="364">MOV</text><text x="1515" y="379">SETC</text><text x="1515" y="394">CLRC</text><text x="1515" y="409">SETC</text><text x="1515" y="424">CLRC</text><text x="1515" y="439">MOVW</text><text x="1515" y="454">CLRC</text><text x="1515" y="469">SPM</text><text x="1515" y="484">MOVW</text><text x="1515" y="499">MOVL</text><text x="1515" y="514">SBF</text><text x="1515" y="529">MOVB</text><text x="1515" y="544">CMPL</text><text x="1515" y="559">SBF</text><text x="1515" y="574">SB</text><text x="1515" y="589">EALLOW</text><text x="1515" y="604">MOVW</text><text x="1515" y="619">MOVB</text><text x="1515" y="634">EDIS</text><text x="1515" y="649">ESTOP0</text><text x="1515" y="664">SB</text><text x="1515" y="679">EALLOW</text><text x="1515" y="694">MOVW</text>
<text x="1606" y="364">@SP, #0x0014</text><text x="1606" y="379">OBJMODE</text><text x="1606" y="394">AMODE</text><text x="1606" y="409">M0M1MAP</text><text x="1606" y="424">PAGE0</text><text x="1606" y="439">DP, #0x0</text><text x="1606" y="454">OVM</text><text x="1606" y="469">#0</text><text x="1606" y="484">DP, #0x1741</text><text x="1606" y="499">ACC, @0x34</text><text x="1606" y="514">13, EQ</text><text x="1606" y="529">ACC, #21</text><text x="1606" y="544">ACC, @0x34</text><text x="1606" y="559">2, NEQ</text><text x="1606" y="574">9, UNC</text><text x="1606" y="604">DP, #0x1c0</text><text x="1606" y="619">@0x29, #0x28, UNC</text><text x="1606" y="664">0, UNC</text><text x="1606" y="694">DP, #0x1c0</text>
</g>
</g>
<rect x="1887" y="352" width="16" height="339" fill="#f0f0f0"/>
<rect x="1887" y="373" width="15" height="87" fill="#cdcdcd"/>
<path d="M1891 363l3.500-3.500 3.500 3.500" fill="none" stroke="#444" stroke-width="1.500"/>
<path d="M1891 680l3.500 3.500 3.500-3.500" fill="none" stroke="#444" stroke-width="1.500"/>
<rect x="1346" y="691" width="70" height="19" fill="#f8f8f8"/>
<rect x="1415" y="691" width="487" height="16" fill="#f0f0f0"/>
<path d="M1425 695l-3.500 3.500 3.500 3.500M1876 695l3.500 3.500-3.500 3.500" fill="none" stroke="#bbb" stroke-width="1.500"/>
<rect x="1905.500" y="370.500" width="9" height="4" fill="#e4f0d4" stroke="#c6dba8"/>

<!-- CONSOLE PANEL -->
<rect x="3.500" y="716.500" width="1913" height="294" rx="3" fill="#fff" stroke="#e2e2e2"/>
<rect x="4" y="717" width="1912" height="24" fill="url(#tabg)"/>
<path d="M4 741.500h1912" stroke="#e6e6e6"/>
<path d="M4 741V719q0-3 3-3h88q0 0 0 3v22z" fill="#fff" stroke="#e2e2e2"/>
<use href="#mon" x="9" y="722" width="13" height="13"/>
<text x="27" y="733" textLength="42" lengthAdjust="spacingAndGlyphs">Console</text>
<use href="#x" x="77" y="724" width="11" height="11"/>
<path d="M1694.500 721.500h8l3 3v10h-11z" fill="#fff" stroke="#a88c55"/><path d="M1697 725h5M1697 728h6M1697 731h4" stroke="#6a8ab0"/><path d="M1703 731l6 5M1709 731l-6 5" stroke="#666" stroke-width="2"/>
<rect x="1718.500" y="721.500" width="13" height="14" fill="#eef4fb" stroke="#6a8ab0"/><path d="M1727 722v13" stroke="#6a8ab0"/><rect x="1717" y="730" width="7" height="6" fill="#d8a030" stroke="#a07a20"/><path d="M1718.500 730v-2a2 2 0 0 1 4 0v2" fill="none" stroke="#a07a20"/>
<path d="M1740.500 721.500h8l3 3v10h-11z" fill="#fff" stroke="#a88c55"/><path d="M1743 725h5M1743 728h6" stroke="#6a8ab0"/><path d="M1754 724v6h-7" fill="none" stroke="#d8b050" stroke-width="2"/>
<path d="M1761.500 720v17" stroke="#999"/>
<rect x="1772.500" y="725.500" width="13" height="10" fill="#eef4fb" stroke="#6a8ab0"/><rect x="1773" y="726" width="12" height="3" fill="#5c8fc8"/><path d="M1786 721l-6 6" stroke="#3a9a4a" stroke-width="3"/>
<rect x="1796.500" y="721.500" width="12" height="9" rx="1.500" fill="#f4f4f4" stroke="#888" stroke-width="1.500"/><path d="M1799 733.500h7" stroke="#888" stroke-width="2"/>
<use href="#trig" x="1817" y="726" width="8" height="5"/>
<use href="#wnew" x="1832" y="721" width="16" height="16"/>
<use href="#tri" x="1855" y="726" width="8" height="5"/>
<use href="#min" x="1872" y="723" width="10" height="5"/><use href="#max" x="1895" y="723" width="10" height="10"/>
<text x="4" y="754" textLength="124" lengthAdjust="spacingAndGlyphs">TMS320F280049C.ccxml</text>
<path d="M4 757.500h1912" stroke="#a8a8a8"/>
<g class="m">
<text x="6" y="771" style="fill:#111">C28xx_CPU1: GEL Output:</text>
<text x="6" y="786" style="fill:#111">Memory Map Initialization Complete</text>
<text x="6" y="801" style="fill:#111">C28xx_CPU1: GEL Output: ... DCSM Initialization Start ...</text>
<text x="6" y="816" style="fill:#111">C28xx_CPU1: GEL Output: ... DCSM Initialization Done ...</text>
</g>
<rect x="1900" y="758" width="16" height="252" fill="#f0f0f0"/>
<path d="M1904 770l3.500-3.500 3.500 3.500" fill="none" stroke="#bbb" stroke-width="1.500"/>
<path d="M1904 983l3.500 3.500 3.500-3.500" fill="none" stroke="#bbb" stroke-width="1.500"/>
<rect x="4" y="993" width="1912" height="17" fill="#f0f0f0"/>
<path d="M14 998l-3.500 3.500 3.500 3.500" fill="none" stroke="#bbb" stroke-width="1.500"/>

<!-- STATUS -->
<rect y="1010" width="1920" height="30" fill="#e6e6e6"/>
<path d="M0 1010.500h1920" stroke="#fafafa"/>
<rect x="1528.500" y="1014.500" width="29" height="25" fill="#efefef" stroke="#d0d0d0"/>
<circle cx="1536" cy="1029" r="5" fill="#e8d8a0" stroke="#a88c55"/><rect x="1539" y="1024" width="8" height="7" fill="#8aaed8" stroke="#4a6a98"/><path d="M1534 1021l3-3v2h3v3h-3v2z" fill="#f0c040"/>
<g stroke="#999" stroke-width="2" stroke-dasharray="2 3"><path d="M1560 1023v14M1851 1023v14M1871 1023v14"/></g>

<!-- NOTIFICATION -->
<rect x="1686" y="932" width="219" height="92" fill="#000" opacity=".12"/>
<rect x="1683.500" y="928.500" width="218" height="92" fill="#fff" stroke="#a0a0a0"/>
<path d="M1684 958.500h217" stroke="#b0b0b0"/>
<text x="1684.500" y="950" textLength="93.500" lengthAdjust="spacingAndGlyphs" style="fill:#000">Updates Available</text>
<path d="M1885 943l6 6M1891 943l-6 6" stroke="#111" stroke-width="1.800"/>
<text x="1689" y="978" textLength="207" lengthAdjust="spacingAndGlyphs">Updates are available for your software.</text>
<text x="1689" y="993" textLength="180" lengthAdjust="spacingAndGlyphs">Click to review and install updates.</text>
<text x="1689" y="1013" textLength="32" lengthAdjust="spacingAndGlyphs">Set up</text>
<text x="1725" y="1013" textLength="93" lengthAdjust="spacingAndGlyphs" style="fill:#0a66d8;text-decoration:underline">Reminder options</text>
</svg>
</body></html>
